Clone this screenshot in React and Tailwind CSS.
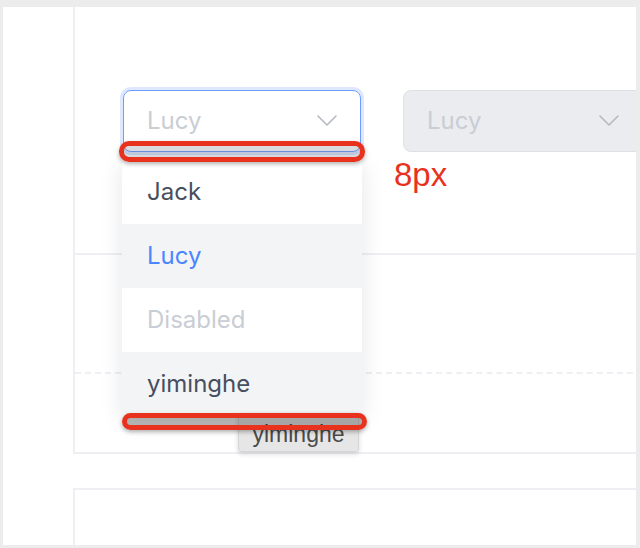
import React from 'react';

const Chevron = () => (
  <svg width="22" height="14" viewBox="0 0 22 14" fill="none" stroke="#b4b9c2" strokeWidth={1.6} strokeLinecap="round" strokeLinejoin="round">
    <polyline points="2,2 11,11 20,2" />
  </svg>
);

const options = [
  { label: 'Jack', cls: 'bg-white text-[#474f5f]' },
  { label: 'Lucy', cls: 'bg-[#f3f4f6] text-[#4a86ff]' },
  { label: 'Disabled', cls: 'bg-white text-[#c9cdd4]' },
  { label: 'yiminghe', cls: 'bg-[#f3f4f6] text-[#474f5f]' },
];

const App = () => {
  return (
    <div className="w-[640px] h-[548px] bg-[#ececec] pt-[7px] pl-[3px] pr-[4px] pb-[3px] overflow-hidden font-['Inter',sans-serif]">
      <div className="relative h-full bg-white overflow-hidden pl-[70px] flex flex-col">
        {/* first card */}
        <div className="w-[600px] h-[447px] shrink-0 border-l-2 border-b-2 border-[#eeeff3] pt-[83px]">
          <div className="flex items-center gap-[42px] pl-[48px]">
            <div className="w-[238px] h-[62px] shrink-0 rounded-[8px] border border-[#6f9cff] shadow-[0_0_0_3px_rgba(64,128,255,0.18)] flex items-center justify-between pl-[23px] pr-[22px]">
              <span className="text-[24px] text-[#c9cdd4]">Lucy</span>
              <Chevron />
            </div>
            <div className="w-[240px] h-[62px] shrink-0 rounded-[8px] border border-[#dfe0e6] bg-[#ebecf0] flex items-center justify-between pl-[23px] pr-[22px]">
              <span className="text-[24px] text-[#c9cdd4]">Lucy</span>
              <Chevron />
            </div>
          </div>
          <div className="mt-[101px] border-t-2 border-[#eeeff3]"></div>
          <div className="mt-[117px] border-t-2 border-dashed border-[#eeeff3]"></div>
        </div>

        {/* second card */}
        <div className="w-[600px] flex-1 mt-[34px] border-l-2 border-t-2 border-[#eeeff3]"></div>

        {/* dropdown */}
        <div className="absolute left-[119px] top-[153px] w-[240px] bg-white shadow-[0_4px_22px_rgba(0,0,0,0.1)]">
          {options.map((o) => (
            <div key={o.label} className={`h-[64px] flex items-center pl-[25px] text-[24px] ${o.cls}`}>
              {o.label}
            </div>
          ))}
        </div>

        {/* native title tooltip */}
        <div className="absolute left-[235px] top-[406px] w-[121px] h-[39px] bg-[#e6e6e6] border border-[#d6d6d6] rounded-[3px] shadow-[0_2px_5px_rgba(0,0,0,0.15)] flex items-end justify-center pb-[5px] font-['Liberation_Sans',sans-serif] text-[23px] text-[#4a4a4a] leading-none">
          yiminghe
        </div>

        {/* annotations */}
        <div className="absolute left-[116px] top-[134px] w-[246px] h-[21px] rounded-[10px] border-[5px] border-[#e8321e] bg-[rgba(90,100,120,0.22)] shadow-[0_2px_4px_rgba(0,0,0,0.3)]"></div>
        <div className="absolute left-[119px] top-[406px] w-[245px] h-[17px] rounded-[9px] border-[5px] border-[#e8321e] bg-[rgba(0,0,0,0.28)] shadow-[0_2px_4px_rgba(0,0,0,0.3)]"></div>
        <div className="absolute left-[391px] top-[151px] font-['Liberation_Sans',sans-serif] text-[33px] leading-none text-[#e8321e]">
          8px
        </div>
      </div>
    </div>
  );
};

export default App;
